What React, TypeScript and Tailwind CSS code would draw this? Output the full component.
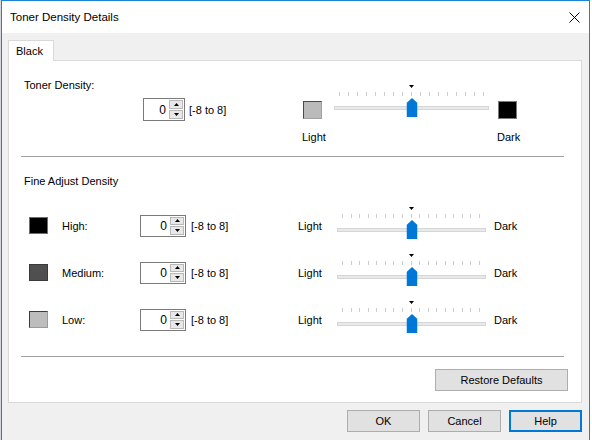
import React from "react";

const TICKS = Array.from({ length: 17 }, (_, i) => i);

function Slider({ wide }: { wide: boolean }) {
  return (
    <div className={wide ? "relative h-[34px] w-[155px]" : "relative h-[34px] w-[149px]"}>
      {/* value marker */}
      <div className="flex h-[3px] justify-center">
        <svg width="5" height="3" className="block">
          <polygon points="0,0 5,0 2.5,3" fill="#000" />
        </svg>
      </div>
      {/* tick row */}
      <div
        className={
          wide
            ? "mt-[4px] flex h-[4px] justify-between px-[5px]"
            : "mt-[4px] flex h-[4px] justify-between pl-[5px] pr-[6px]"
        }
      >
        {TICKS.map((t) => (
          <div key={t} className="h-full w-px bg-[#cdcdcd]" />
        ))}
      </div>
      {/* track */}
      <div className="mt-[10px] h-[4px] border border-[#d6d6d6] bg-[#e7eaea]" />
      {/* thumb */}
      <svg
        width="11"
        height="19"
        className="absolute left-1/2 top-[13px] block -translate-x-1/2"
      >
        <polygon points="5.5,0 11,5 11,19 0,19 0,5" fill="#0078d7" />
      </svg>
    </div>
  );
}

function Arrow({ up }: { up: boolean }) {
  return (
    <svg width="5" height="3" className="block">
      {up ? (
        <polygon points="0,3 5,3 2.5,0" fill="#000" />
      ) : (
        <polygon points="0,0 5,0 2.5,3" fill="#000" />
      )}
    </svg>
  );
}

function Spin({ big }: { big: boolean }) {
  return (
    <div
      className={
        big
          ? "flex h-[23px] w-[42px] border border-[#7a7a7a] bg-white"
          : "flex h-[22px] w-[46px] border border-[#7a7a7a] bg-white"
      }
    >
      <div className="flex flex-1 items-center justify-end pr-[2px] text-[12px] leading-none">0</div>
      <div className="flex w-[16px] flex-col gap-px p-px">
        <div className="flex flex-1 items-center justify-center border border-[#b8b8b8] bg-[#e8e8e8]">
          <Arrow up />
        </div>
        <div className="flex flex-1 items-center justify-center border border-[#b8b8b8] bg-[#e8e8e8]">
          <Arrow up={false} />
        </div>
      </div>
    </div>
  );
}

function Button({ label, focused }: { label: string; focused?: boolean }) {
  return (
    <div
      className={
        focused
          ? "flex h-[22px] w-[73px] items-center justify-center border-2 border-[#0078d7] bg-[#e1e1e1]"
          : "flex h-[22px] w-[73px] items-center justify-center border border-[#adadad] bg-[#e1e1e1]"
      }
    >
      {label}
    </div>
  );
}

const ROWS = [
  { name: "High:", swatch: "h-[17px] w-[19px] border border-[#6e6e6e] bg-black" },
  { name: "Medium:", swatch: "h-[17px] w-[19px] border border-[#3a3a3a] bg-[#4f4f4f]" },
  { name: "Low:", swatch: "h-[17px] w-[19px] border border-[#9a9a9a] border-l-[#3c3c3c] border-t-[#3c3c3c] bg-[#bdbdbd]" },
];

export default function App() {
  return (
    <div className="flex h-[440px] w-[592px] bg-white font-['Liberation_Sans',Arial,sans-serif] text-[11px] leading-[14px] text-black">
      <div className="w-px bg-[#d4d8dc]" />
      <div className="flex w-[589px] flex-col border-x border-t border-[#1883d7] bg-[#f0f0f0]">
        {/* title bar */}
        <div className="flex h-[32px] items-center justify-between bg-white pl-[8px] pr-[9px] text-[11.5px]">
          <span>Toner Density Details</span>
          <svg width="11" height="11" className="block">
            <path d="M0.5 0.5 L10.5 10.5 M10.5 0.5 L0.5 10.5" stroke="#000" strokeWidth="1" />
          </svg>
        </div>

        <div className="flex flex-col pl-[6px] pr-[7px] pt-[7px]">
          {/* tab */}
          <div className="relative z-10 -mb-px flex h-[21px] w-[46px] items-center border-x border-t border-[#d9d9d9] bg-white pl-[7px]">
            Black
          </div>

          {/* tab page */}
          <div className="flex h-[343px] flex-col border border-[#d9d9d9] bg-white">
            <div className="flex flex-col pl-[12px]">
              {/* overall density */}
              <div className="flex h-[95px]">
                <div className="flex w-[277px] flex-col">
                  <div className="pl-[3px] pt-[17px]">Toner Density:</div>
                  <div className="ml-[122px] mt-[6px] flex items-center gap-[4px]">
                    <Spin big />
                    <span>[-8 to 8]</span>
                  </div>
                </div>
                <div className="flex flex-col pt-[24px]">
                  <div className="flex items-start">
                    <div className="ml-[5px] mt-[16px] h-[18px] w-[19px] border border-[#a0a0a0] border-l-[#4a4a4a] border-t-[#4a4a4a] bg-[#bbbbbb]" />
                    <div className="ml-[12px]">
                      <Slider wide />
                    </div>
                    <div className="ml-[9px] mt-[16px] h-[18px] w-[19px] border border-[#7a7a7a] bg-black" />
                  </div>
                  <div className="mt-[11px] flex">
                    <span className="ml-[4px] w-[195px]">Light</span>
                    <span>Dark</span>
                  </div>
                </div>
              </div>

              <div className="h-px w-[543px] bg-[#a0a0a0]" />

              {/* fine adjustment */}
              <div className="flex flex-col pb-[13px]">
                <div className="pl-[3px] pt-[17px]">Fine Adjust Density</div>
                <div className="mt-[14px] flex flex-col">
                  {ROWS.map((r) => (
                    <div key={r.name} className="flex h-[47px] items-center">
                      <div className={"ml-[8px] " + r.swatch} />
                      <span className="ml-[14px] w-[78px]">{r.name}</span>
                      <Spin big={false} />
                      <span className="ml-[5px] w-[107px]">[-8 to 8]</span>
                      <span className="w-[39px]">Light</span>
                      <div className="self-start pt-[5px]">
                        <Slider wide={false} />
                      </div>
                      <span className="ml-[8px]">Dark</span>
                    </div>
                  ))}
                </div>
              </div>

              <div className="h-px w-[543px] bg-[#a0a0a0]" />
            </div>

            <div className="mt-[12px] flex justify-end pr-[13px]">
              <div className="flex h-[22px] w-[133px] items-center justify-center border border-[#adadad] bg-[#e1e1e1]">
                Restore Defaults
              </div>
            </div>
          </div>

          {/* dialog buttons */}
          <div className="mt-[7px] flex justify-end gap-[8px]">
            <Button label="OK" />
            <Button label="Cancel" />
            <Button label="Help" focused />
          </div>
        </div>
      </div>
      <div className="w-[2px] bg-white" />
    </div>
  );
}
